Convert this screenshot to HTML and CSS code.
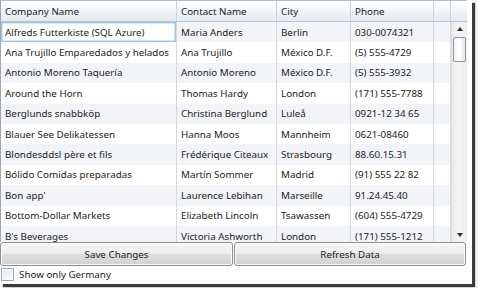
FILE: index.html
```html
<!DOCTYPE html>
<html>
<head>
<meta charset="utf-8">
<link rel="stylesheet" href="styles.css">
</head>
<body>
<div class="window">
  <div class="grid">
    <div class="header">
      <div class="hcell">Company Name</div>
      <div class="hcell">Contact Name</div>
      <div class="hcell">City</div>
      <div class="hcell">Phone</div>
      <div class="hcell"></div>
      <div class="hcell corner"></div>
    </div>
    <div class="body">
      <div class="rows">
        <div class="row alt"><div class="cell selected">Alfreds Futterkiste (SQL Azure)</div><div class="cell">Maria Anders</div><div class="cell">Berlin</div><div class="cell">030-0074321</div><div class="cell"></div></div>
        <div class="row"><div class="cell">Ana Trujillo Emparedados y helados</div><div class="cell">Ana Trujillo</div><div class="cell">México D.F.</div><div class="cell">(5) 555-4729</div><div class="cell"></div></div>
        <div class="row alt"><div class="cell">Antonio Moreno Taquería</div><div class="cell">Antonio Moreno</div><div class="cell">México D.F.</div><div class="cell">(5) 555-3932</div><div class="cell"></div></div>
        <div class="row"><div class="cell">Around the Horn</div><div class="cell">Thomas Hardy</div><div class="cell">London</div><div class="cell">(171) 555-7788</div><div class="cell"></div></div>
        <div class="row alt"><div class="cell">Berglunds snabbköp</div><div class="cell">Christina Berglund</div><div class="cell">Luleå</div><div class="cell">0921-12 34 65</div><div class="cell"></div></div>
        <div class="row"><div class="cell">Blauer See Delikatessen</div><div class="cell">Hanna Moos</div><div class="cell">Mannheim</div><div class="cell">0621-08460</div><div class="cell"></div></div>
        <div class="row alt"><div class="cell">Blondesddsl père et fils</div><div class="cell">Frédérique Citeaux</div><div class="cell">Strasbourg</div><div class="cell">88.60.15.31</div><div class="cell"></div></div>
        <div class="row"><div class="cell">Bólido Comidas preparadas</div><div class="cell">Martín Sommer</div><div class="cell">Madrid</div><div class="cell">(91) 555 22 82</div><div class="cell"></div></div>
        <div class="row alt"><div class="cell">Bon app'</div><div class="cell">Laurence Lebihan</div><div class="cell">Marseille</div><div class="cell">91.24.45.40</div><div class="cell"></div></div>
        <div class="row"><div class="cell">Bottom-Dollar Markets</div><div class="cell">Elizabeth Lincoln</div><div class="cell">Tsawassen</div><div class="cell">(604) 555-4729</div><div class="cell"></div></div>
        <div class="row alt"><div class="cell">B's Beverages</div><div class="cell">Victoria Ashworth</div><div class="cell">London</div><div class="cell">(171) 555-1212</div><div class="cell"></div></div>
      </div>
      <div class="scrollbar">
        <div class="arrow up"></div>
        <div class="track"><div class="thumb"></div></div>
        <div class="arrow down"></div>
      </div>
    </div>
  </div>
  <div class="buttons">
    <button class="btn">Save Changes</button>
    <button class="btn">Refresh Data</button>
  </div>
  <label class="check"><span class="box"></span><span>Show only Germany</span></label>
</div>
</body>
</html>
```

FILE: styles.css
```css
html, body {
  margin: 0;
  padding: 0;
  background: #f4f4f4;
}
body {
  width: 478px;
  height: 288px;
  overflow: hidden;
  font-family: "Noto Sans", "Open Sans", sans-serif;
  font-size: 9.8px;
  color: #1c1c1c;
}
.window {
  width: 472px;
  height: 284px;
  background: #ffffff;
  box-shadow: 3px 3px 1px #3a3a3a;
  display: flex;
  flex-direction: column;
}
.grid {
  width: 467px;
  height: 242px;
  box-sizing: border-box;
  border-left: 1px solid #9aa7b4;
  border-top: 1px solid #b5c0cb;
  display: flex;
  flex-direction: column;
  overflow: hidden;
}
.header {
  display: grid;
  grid-template-columns: 176px 100px 74px 83px 17px 16px;
  height: 20px;
  flex: none;
  background: linear-gradient(#ffffff 0%, #f3f6f9 45%, #e3e9f0 100%);
  border-bottom: 1px solid #b9c4cf;
}
.hcell {
  border-right: 1px solid #c9d2db;
  padding-left: 4px;
  display: flex;
  align-items: center;
  white-space: nowrap;
  color: #222;
}
.hcell.corner {
  border-right: none;
}
.body {
  display: flex;
  flex: 1;
  min-height: 0;
}
.rows {
  width: 450px;
  overflow: hidden;
}
.row {
  display: grid;
  grid-template-columns: 176px 100px 74px 83px 17px;
  height: 20.4px;
  background: #ffffff;
}
.row.alt {
  background: #f2f4f8;
}
.cell {
  border-right: 1px solid #d3d9e0;
  padding-left: 4px;
  display: flex;
  align-items: center;
  white-space: nowrap;
  overflow: hidden;
}
.cell.selected {
  box-shadow: inset 0 0 0 1px #9cc8dc, inset 0 0 0 2px #d4e8f1;
  background: #ffffff;
}
.scrollbar {
  width: 16px;
  display: flex;
  flex-direction: column;
  background: linear-gradient(90deg, #e9e9ea, #f5f5f6 40%, #eeeeef);
  border-left: 1px solid #dfe3e7;
  box-sizing: border-box;
}
.arrow {
  height: 14px;
  display: flex;
  align-items: center;
  justify-content: center;
}
.arrow.up::before {
  content: "";
  border-left: 3px solid transparent;
  border-right: 3px solid transparent;
  border-bottom: 4px solid #2a2a2a;
}
.arrow.down::before {
  content: "";
  border-left: 3px solid transparent;
  border-right: 3px solid transparent;
  border-top: 4px solid #2a2a2a;
}
.track {
  flex: 1;
  padding: 1px 1px 0 1px;
}
.thumb {
  height: 23px;
  border: 1px solid #8f959c;
  border-radius: 2px;
  background: linear-gradient(90deg, #f3f3f3, #ffffff 50%, #e4e4e4);
}
.buttons {
  display: grid;
  grid-template-columns: 233px 232px;
  gap: 1px;
  height: 24px;
  width: 466px;
}
.btn {
  font: inherit;
  color: #1c1c1c;
  margin: 0;
  padding: 0;
  border: 1px solid #8d8d8d;
  border-radius: 3px;
  background: linear-gradient(#f7f7f7 0%, #ececec 48%, #dedede 52%, #d2d2d2 100%);
  box-shadow: inset 0 0 0 1px #fbfbfb;
}
.check {
  display: flex;
  align-items: center;
  gap: 5px;
  height: 17px;
  padding-left: 1px;
}
.box {
  width: 11px;
  height: 11px;
  border: 1px solid #8cb0c8;
  background: linear-gradient(135deg, #e4e9ee, #ffffff);
  box-shadow: inset 0 0 0 1px #f4f6f8;
}
```
